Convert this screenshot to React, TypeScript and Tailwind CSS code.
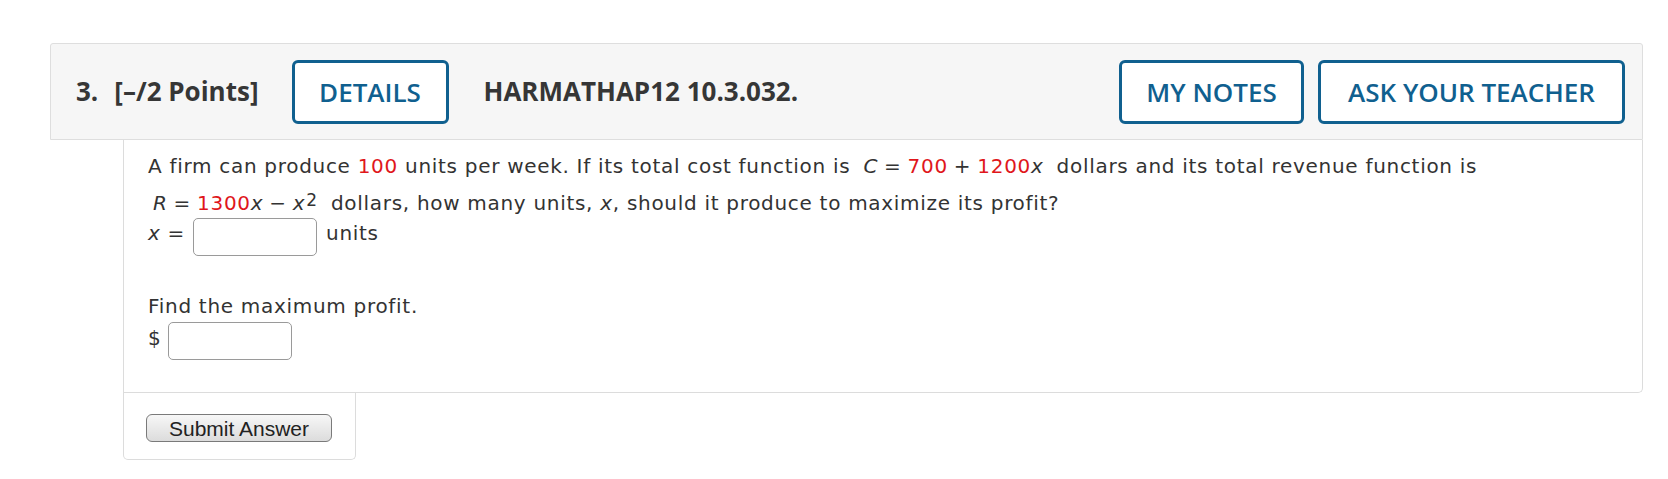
import React from 'react';

const body = { fontFamily: '"DejaVu Sans", Verdana, sans-serif' };
const head = { fontFamily: '"Open Sans", "Noto Sans", sans-serif' };

function Red({ children }: { children: React.ReactNode }) {
  return <span className="text-[#e0161b]">{children}</span>;
}

function Box() {
  return <div className="w-[124px] h-[38px] border border-[#9a9a9a] rounded-[5px] bg-white shrink-0" />;
}

function HeadButton({ label, w }: { label: string; w: string }) {
  return (
    <button className={`${w} h-[64px] flex items-center justify-center border-[3px] border-[#10608f] rounded-[6px] text-[26px] font-semibold text-[#10608f] bg-white leading-none`}>
      {label}
    </button>
  );
}

export default function App() {
  return (
    <div className="w-[1668px] h-[479px] bg-white pt-[43px] pl-[50px]">
      <div
        style={head}
        className="w-[1593px] h-[97px] bg-[#f6f6f6] border border-[#dedede] rounded-t-[3px] flex items-center pl-[25px] pr-[17px] text-[#363636] text-[26px]"
      >
        <span className="font-bold">3.</span>
        <span className="font-bold ml-[16px]">[–/2 Points]</span>
        <div className="ml-[33px]">
          <HeadButton label="DETAILS" w="w-[157px]" />
        </div>
        <span className="font-bold ml-[35px]">HARMATHAP12 10.3.032.</span>
        <div className="ml-auto flex gap-[14px]">
          <HeadButton label="MY NOTES" w="w-[185px]" />
          <HeadButton label="ASK YOUR TEACHER" w="w-[307px]" />
        </div>
      </div>

      <div style={body} className="ml-[73px] w-[1520px] border-x border-b border-[#dcdcdc] rounded-br-[5px] bg-white pt-[8px] pl-[24px] pb-[32px] text-[20px] tracking-[0.7px] text-[#333]">
        <div className="leading-[37px] whitespace-nowrap">
          A firm can produce <Red>100</Red> units per week. If its total cost function is{' '}
          <span className="ml-[6px]">
            <i>C</i>
            <span className="mx-[6px]">=</span>
            <Red>700</Red>
            <span className="mx-[6px]">+</span>
            <Red>1200</Red>
            <i>x</i>
          </span>
          <span className="ml-[6px]"> dollars and its total revenue function is</span>
        </div>
        <div className="leading-[37px] whitespace-nowrap">
          <span className="ml-[5px]">
            <i>R</i>
            <span className="mx-[6px]">=</span>
            <Red>1300</Red>
            <i>x</i>
            <span className="mx-[6px]">−</span>
            <i>x</i>
            <sup className="text-[17px] relative -top-[4px] ml-[1px]">2</sup>
          </span>
          <span className="ml-[6px]"> dollars, how many units, <i>x</i>, should it produce to maximize its profit?</span>
        </div>
        <div className="flex items-start -mt-[4px]">
          <span className="leading-[24px] pt-[3px] w-[45px]">
            <i>x</i> =
          </span>
          <Box />
          <span className="leading-[24px] pt-[3px] ml-[9px]">units</span>
        </div>
        <div className="leading-[24px] mt-[38px]">Find the maximum profit.</div>
        <div className="flex items-start mt-[4px]">
          <span className="leading-[24px] pt-[4px] w-[20px]">$</span>
          <Box />
        </div>
      </div>

      <div className="ml-[73px] w-[233px] h-[67px] border-x border-b border-[#dcdcdc] rounded-b-[5px] bg-white pl-[22px] pt-[21px]">
        <button
          style={{ fontFamily: '"Liberation Sans", Arial, sans-serif' }}
          className="w-[186px] h-[28px] border border-[#7a7a7a] rounded-[6px] bg-gradient-to-b from-[#f7f7f7] to-[#dcdcdc] text-[21px] leading-none text-[#222]"
        >
          Submit Answer
        </button>
      </div>
    </div>
  );
}
